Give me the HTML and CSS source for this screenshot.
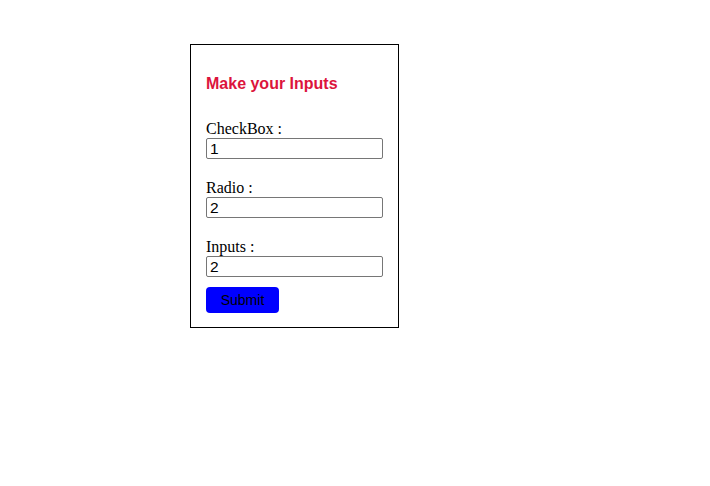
FILE: index.html
```html
<!DOCTYPE html>
<html>
<head>
<meta charset="utf-8">
<title>Make your Inputs</title>
<link rel="stylesheet" href="styles.css">
</head>
<body>
<form class="card">
  <h3 class="title">Make your Inputs</h3>
  <label class="field-label" for="cb">CheckBox :</label>
  <input class="field-input" id="cb" type="text" value="1">
  <label class="field-label" for="rd">Radio :</label>
  <input class="field-input" id="rd" type="text" value="2">
  <label class="field-label" for="ip">Inputs :</label>
  <input class="field-input" id="ip" type="text" value="2">
  <button class="submit-btn" type="button">Submit</button>
</form>
</body>
</html>
```

FILE: styles.css
```css
body {
  margin: 8px;
  font-family: "Liberation Serif", "Times New Roman", serif;
  font-size: 16px;
  background: #ffffff;
  color: #000000;
}

.card {
  display: flex;
  flex-direction: column;
  align-items: flex-start;
  width: 177px;
  margin: 36px 0 0 182px;
  padding: 0 15px 14px;
  border: 1px solid #000000;
}

.title {
  margin: 30px 0 0;
  font-family: "Liberation Sans", Arial, sans-serif;
  font-size: 16px;
  line-height: 18px;
  font-weight: bold;
  color: #dc143c;
}

.field-label {
  display: block;
  line-height: 18px;
  margin-top: 20px;
}

.title + .field-label {
  margin-top: 27px;
}

.field-input {
  box-sizing: border-box;
  width: 177px;
  height: 21px;
  margin: 0;
  padding: 0 3px;
  border: 1px solid #767676;
  border-radius: 2px;
  font-family: "Liberation Sans", Arial, sans-serif;
  font-size: 15.5px;
  line-height: 19px;
  color: #000000;
  background: #ffffff;
}

.submit-btn {
  box-sizing: border-box;
  width: 73px;
  height: 26px;
  margin-top: 10px;
  padding: 0;
  border: none;
  border-radius: 4px;
  background: #0000ff;
  color: #000000;
  font-family: "Liberation Sans", Arial, sans-serif;
  font-size: 14px;
  text-align: center;
}
```
